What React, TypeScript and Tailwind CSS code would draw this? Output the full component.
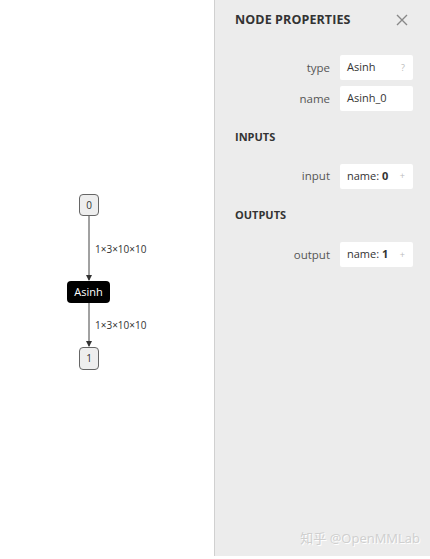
import React from "react";

const font = { fontFamily: '"Open Sans", "Noto Sans", "Noto Sans CJK SC", sans-serif' };

function Field({ label, children, hint }: { label: string; children: React.ReactNode; hint: string }) {
  return (
    <div className="flex items-center h-[25px]">
      <div className="w-[125px] pr-[10px] text-right text-[11.5px] text-[#555]">{label}</div>
      <div className="flex items-center justify-between w-[73px] h-[25px] bg-white rounded-[2px] pl-[7px] pr-[8px] text-[11px] text-[#333]">
        <span>{children}</span>
        <span className="text-[9px] text-[#bbb]">{hint}</span>
      </div>
    </div>
  );
}

function Graph() {
  return (
    <div className="relative w-[214px] h-full">
      <svg className="absolute left-0 top-0" width="214" height="559">
        <defs>
          <marker id="arr" markerWidth="6" markerHeight="6" refX="5" refY="3" orient="auto">
            <path d="M0,0 L6,3 L0,6 z" fill="#333" />
          </marker>
        </defs>
        <line x1="89" y1="216" x2="89" y2="280" stroke="#444" strokeWidth="1" markerEnd="url(#arr)" />
        <line x1="89" y1="303" x2="89" y2="346" stroke="#444" strokeWidth="1" markerEnd="url(#arr)" />
      </svg>
      <div className="absolute left-[79px] top-[194px] w-[20px] h-[22px] rounded-[4px] border border-[#666] bg-[#eee] flex items-center justify-center text-[10px] text-[#333]">0</div>
      <div className="absolute left-[95px] top-[242px] text-[10px] text-[#333]">1×3×10×10</div>
      <div className="absolute left-[67px] top-[281px] w-[43px] h-[22px] rounded-[4px] bg-black flex items-center justify-center text-[11px] text-white">Asinh</div>
      <div className="absolute left-[95px] top-[318px] text-[10px] text-[#333]">1×3×10×10</div>
      <div className="absolute left-[79px] top-[347px] w-[20px] h-[23px] rounded-[4px] border border-[#666] bg-[#eee] flex items-center justify-center text-[10px] text-[#333]">1</div>
    </div>
  );
}

export default function App() {
  return (
    <div className="flex w-[430px] h-[559px] bg-white overflow-hidden" style={font}>
      <Graph />
      <div className="flex flex-col w-[216px] h-[556px] bg-[#ececec] border-l border-[#d0d0d0]">
        <div className="flex items-center justify-between h-[40px] pl-[20px] pr-[22px]">
          <span className="text-[12.5px] font-bold text-[#333] tracking-[0.1px]">NODE PROPERTIES</span>
          <svg width="12" height="12" viewBox="0 0 12 12">
            <path d="M1 1 L11 11 M11 1 L1 11" stroke="#888" strokeWidth="1.4" />
          </svg>
        </div>
        <div className="flex flex-col gap-[6px] mt-[15px]">
          <Field label="type" hint="?">Asinh</Field>
          <Field label="name" hint="">Asinh_0</Field>
        </div>
        <div className="pl-[20px] mt-[18px] text-[11px] font-bold text-[#333]">INPUTS</div>
        <div className="mt-[18px]">
          <Field label="input" hint="+">name: <b>0</b></Field>
        </div>
        <div className="pl-[20px] mt-[18px] text-[11px] font-bold text-[#333]">OUTPUTS</div>
        <div className="mt-[19px]">
          <Field label="output" hint="+">name: <b>1</b></Field>
        </div>
        <div className="mt-auto mb-[8px] pr-[10px] text-right text-[13px] text-[#cfcfcf]" style={{ textShadow: "1px 1px 0 #fff" }}>
          知乎 @OpenMMLab
        </div>
      </div>
    </div>
  );
}
